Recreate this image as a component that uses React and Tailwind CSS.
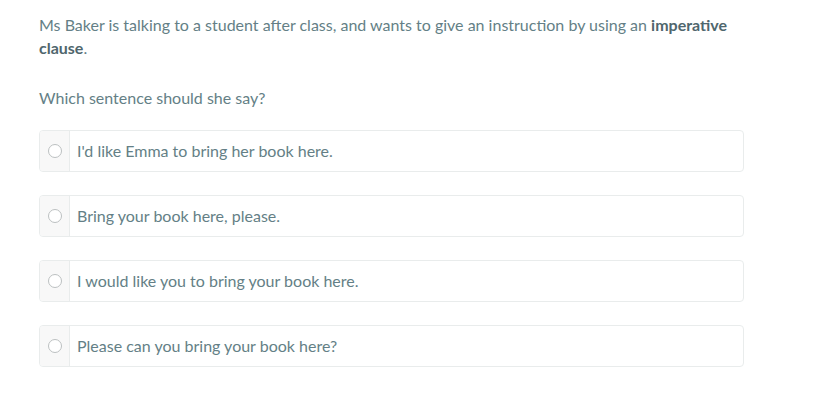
import React from "react";

const options = [
  "I'd like Emma to bring her book here.",
  "Bring your book here, please.",
  "I would like you to bring your book here.",
  "Please can you bring your book here?",
];

export default function App() {
  return (
    <div className="w-[816px] h-[401px] bg-white pl-[39px] pt-[13px]" style={{ fontFamily: "Lato, 'Noto Sans', sans-serif" }}>
      <div className="w-[705px] text-[#647f86]">
        <p className="text-[16px] leading-[23px]">
          Ms Baker is talking to a student after class, and wants to give an instruction by using an{" "}
          <b className="font-bold text-[#4f666d]">imperative</b>{" "}
          <b className="font-bold text-[#4f666d]">clause</b>.
        </p>
        <p className="mt-[27px] text-[16px] leading-[23px]">Which sentence should she say?</p>
        <div className="mt-[21px] flex flex-col gap-[23px]">
          {options.map((o) => (
            <div key={o} className="flex h-[42px] rounded-[4px] border border-[#e9ecec] overflow-hidden">
              <div className="w-[30px] shrink-0 bg-[#f8f8f8] border-r border-[#e9ecec] flex items-center justify-center">
                <span className="block w-[14px] h-[14px] rounded-full border border-[#bcc0c1] bg-white" />
              </div>
              <div className="flex items-center pl-[7px] text-[16px]">{o}</div>
            </div>
          ))}
        </div>
      </div>
    </div>
  );
}
